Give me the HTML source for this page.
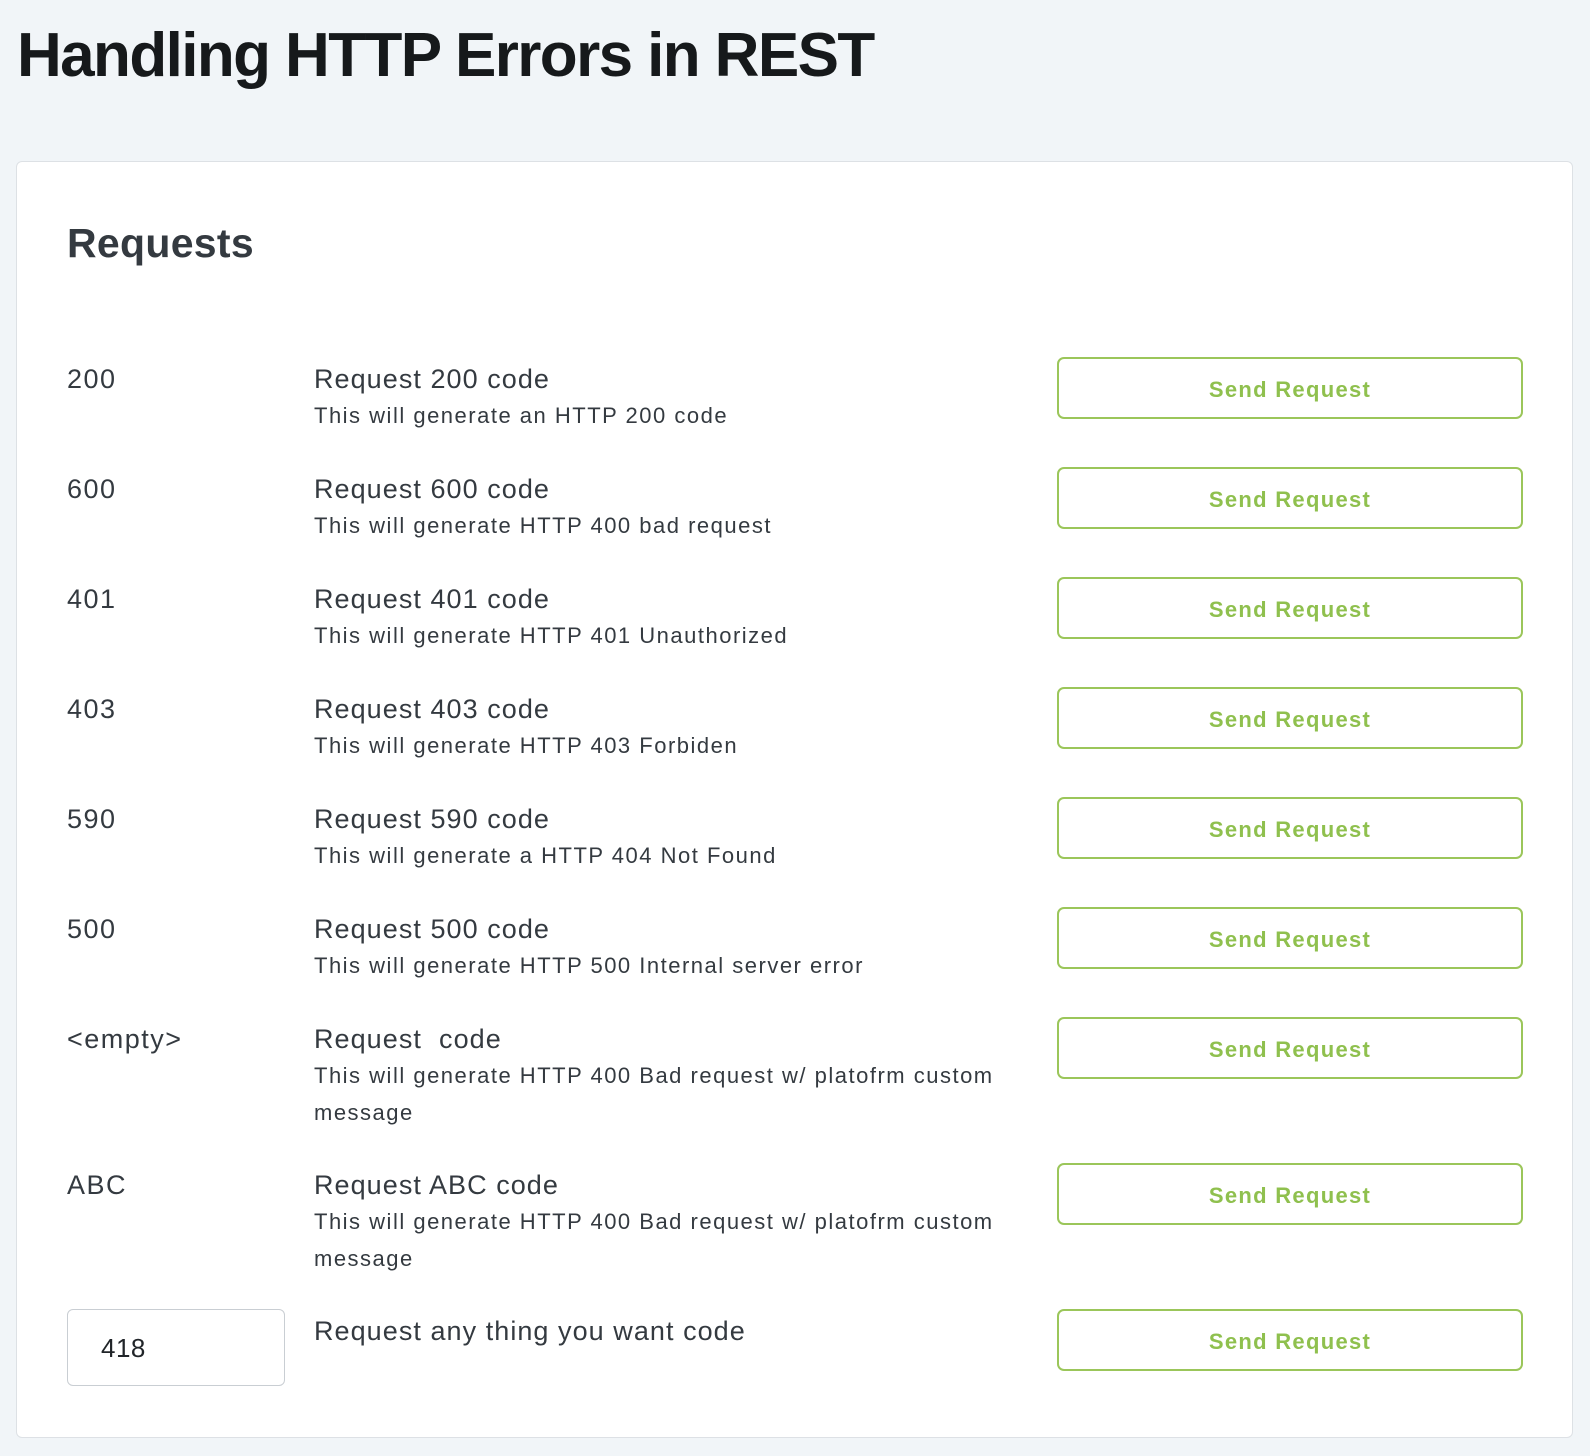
<!DOCTYPE html>
<html><head><meta charset="utf-8"><style>
html,body{margin:0;padding:0}
body{width:1590px;height:1456px;background:#f1f5f8;font-family:"Liberation Sans",sans-serif;position:relative;overflow:hidden;color:#343a40}
h1{position:absolute;left:17px;top:16px;margin:0;font-size:62px;line-height:80px;font-weight:bold;letter-spacing:-1.6px;color:#16191b}
.card{position:absolute;left:16px;top:161px;width:1555px;height:1275px;background:#fff;border:1px solid #dde1e5;border-radius:6px}
h2{position:absolute;left:67px;top:215px;margin:0;font-size:41px;line-height:56px;font-weight:bold;letter-spacing:0.3px;color:#343a40}
.row{position:absolute;left:0;width:1590px}
.code{position:absolute;left:67px;top:4px;font-size:27px;line-height:36px;letter-spacing:1.5px}
.txt{position:absolute;left:314px;top:4px;width:720px}
.t{font-size:27px;line-height:36px;letter-spacing:1.05px}
.s{font-size:22px;line-height:36.5px;letter-spacing:1.5px;margin-top:1px}
.btn{position:absolute;left:1057px;top:0;width:462px;height:58px;border:2px solid #9bc65a;border-radius:7px;color:#8fc04e;font-weight:bold;font-size:22px;line-height:62px;text-align:center;letter-spacing:1.3px}
.inp{position:absolute;left:67px;top:0;width:218px;height:77px;border:1px solid #c9ced3;border-radius:6px;box-sizing:border-box;font-size:26px;line-height:77px;padding-left:33px;color:#212529;letter-spacing:0.5px}
</style></head><body>
<h1>Handling HTTP Errors in REST</h1>
<div class="card"></div>
<h2>Requests</h2>

<div class="row" style="top:357px"><div class="code">200</div><div class="txt"><div class="t">Request 200 code</div><div class="s">This will generate an HTTP 200 code</div></div><div class="btn">Send Request</div></div>
<div class="row" style="top:467px"><div class="code">600</div><div class="txt"><div class="t">Request 600 code</div><div class="s">This will generate HTTP 400 bad request</div></div><div class="btn">Send Request</div></div>
<div class="row" style="top:577px"><div class="code">401</div><div class="txt"><div class="t">Request 401 code</div><div class="s">This will generate HTTP 401 Unauthorized</div></div><div class="btn">Send Request</div></div>
<div class="row" style="top:687px"><div class="code">403</div><div class="txt"><div class="t">Request 403 code</div><div class="s">This will generate HTTP 403 Forbiden</div></div><div class="btn">Send Request</div></div>
<div class="row" style="top:797px"><div class="code">590</div><div class="txt"><div class="t">Request 590 code</div><div class="s">This will generate a HTTP 404 Not Found</div></div><div class="btn">Send Request</div></div>
<div class="row" style="top:907px"><div class="code">500</div><div class="txt"><div class="t">Request 500 code</div><div class="s">This will generate HTTP 500 Internal server error</div></div><div class="btn">Send Request</div></div>
<div class="row" style="top:1017px"><div class="code">&lt;empty&gt;</div><div class="txt"><div class="t">Request &nbsp;code</div><div class="s">This will generate HTTP 400 Bad request w/ platofrm custom<br>message</div></div><div class="btn">Send Request</div></div>
<div class="row" style="top:1163px"><div class="code">ABC</div><div class="txt"><div class="t">Request ABC code</div><div class="s">This will generate HTTP 400 Bad request w/ platofrm custom<br>message</div></div><div class="btn">Send Request</div></div>
<div class="row" style="top:1309px"><div class="inp">418</div><div class="txt"><div class="t">Request any thing you want code</div></div><div class="btn">Send Request</div></div>
</body></html>
